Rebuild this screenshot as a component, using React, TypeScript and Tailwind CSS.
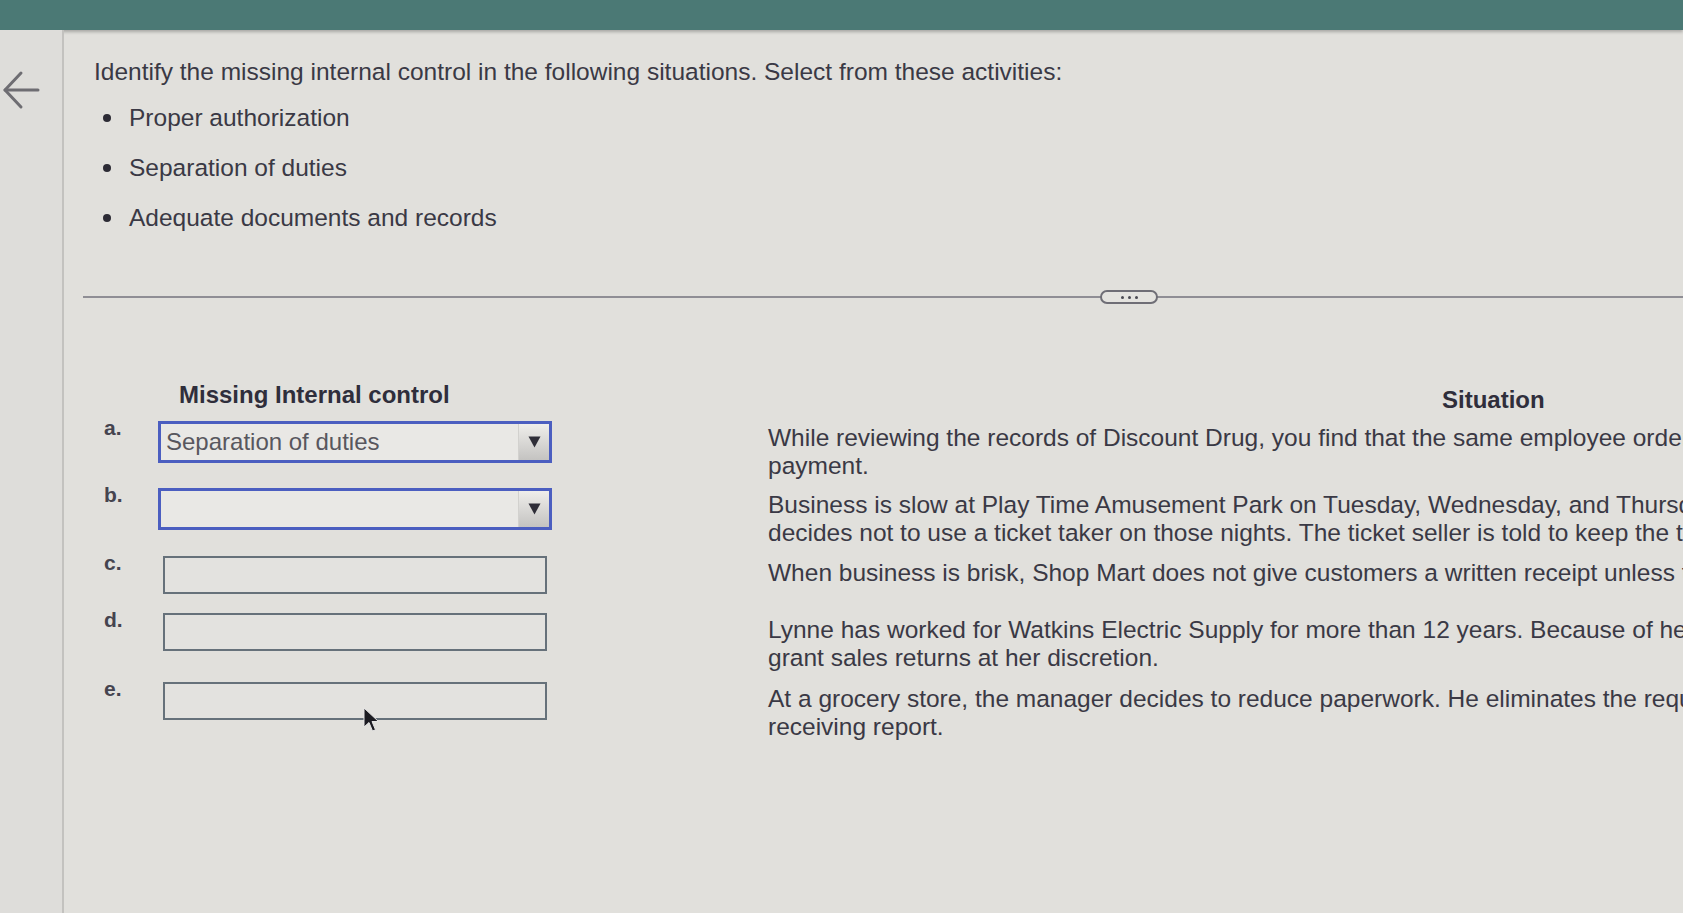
import React from 'react';

const activities = ['Proper authorization', 'Separation of duties', 'Adequate documents and records'];

interface Row {
  label: string;
  kind: 'select' | 'input';
  value?: string;
  lines: string[];
  height: string;
}

const rows: Row[] = [
  {
    label: 'a.',
    kind: 'select',
    value: 'Separation of duties',
    lines: [
      'While reviewing the records of Discount Drug, you find that the same employee orders merchandise and approves invoices for',
      'payment.',
    ],
    height: 'h-[67px]',
  },
  {
    label: 'b.',
    kind: 'select',
    value: '',
    lines: [
      'Business is slow at Play Time Amusement Park on Tuesday, Wednesday, and Thursday nights. To reduce expenses, the business',
      'decides not to use a ticket taker on those nights. The ticket seller is told to keep the tickets as a record of the number sold.',
    ],
    height: 'h-[68px]',
  },
  {
    label: 'c.',
    kind: 'input',
    lines: ['When business is brisk, Shop Mart does not give customers a written receipt unless they ask for one.'],
    height: 'h-[57px]',
  },
  {
    label: 'd.',
    kind: 'input',
    lines: [
      'Lynne has worked for Watkins Electric Supply for more than 12 years. Because of her experience, she is allowed to',
      'grant sales returns at her discretion.',
    ],
    height: 'h-[69px]',
  },
  {
    label: 'e.',
    kind: 'input',
    lines: [
      'At a grocery store, the manager decides to reduce paperwork. He eliminates the requirement that purchases be matched to a',
      'receiving report.',
    ],
    height: 'h-[60px]',
  },
];

function BackArrow() {
  return (
    <svg width="38" height="40" viewBox="0 0 38 40" fill="none" stroke="#6e6d72" strokeWidth="3" strokeLinecap="round" strokeLinejoin="round">
      <polyline points="19,3 3,20 19,37" />
      <line x1="3" y1="20" x2="36" y2="20" />
    </svg>
  );
}

function Cursor() {
  return (
    <svg width="18" height="26" viewBox="0 0 18 26" className="absolute left-[205px] top-[25px]">
      <path d="M1 1 L1 20 L6 15.5 L9.5 24 L12.5 22.8 L9 14.5 L15.5 14.5 Z" fill="#1c1c22" stroke="#e6e6e6" strokeWidth="1" />
    </svg>
  );
}

function SelectBox({ value }: { value: string }) {
  return (
    <div className="flex h-[42px] w-[394px] items-stretch border-[3px] border-[#4b5ec0] bg-[#e9e8e5]">
      <div className="flex flex-1 items-center pl-[5px] text-[24px] text-[#58575e]">{value}</div>
      <div className="flex w-[31px] items-center justify-center border-l border-[#d2d1ce] bg-gradient-to-b from-[#efeeeb] to-[#c4c3c1]">
        <svg width="13" height="12" viewBox="0 0 13 12">
          <path d="M0.5 0.5 H12.5 L6.5 11.5 Z" fill="#2f2e38" />
        </svg>
      </div>
    </div>
  );
}

export default function App() {
  return (
    <div
      className="flex h-[913px] w-[1683px] flex-col overflow-hidden bg-[#e1e0dc] text-[#3a3945]"
      style={{ fontFamily: '"Liberation Sans", Arial, sans-serif' }}
    >
      <div className="h-[30px] shrink-0 bg-[#4b7975] shadow-[0_2px_3px_rgba(0,0,0,0.25)]" />

      <div className="flex flex-1">
        {/* left gutter */}
        <div className="w-[64px] shrink-0 border-r-2 border-[#c3c2bf] bg-[#dedddA] pl-[2px] pt-[40px]">
          <BackArrow />
        </div>

        {/* main column */}
        <div className="flex-1 pl-[19px] pt-[28px]">
          <h1 className="pl-[11px] text-[24.5px] leading-[28px]">
            Identify the missing internal control in the following situations. Select from these activities:
          </h1>

          <ul className="mt-[7px] pl-[20px]">
            {activities.map((a) => (
              <li key={a} className="flex h-[50px] items-center">
                <span className="h-[8px] w-[8px] rounded-full bg-[#2c2b35]" />
                <span className="ml-[18px] text-[24.5px] leading-[28px]">{a}</span>
              </li>
            ))}
          </ul>

          {/* divider with handle */}
          <div className="relative mt-[53px] h-[2px] bg-[#8f8e95]">
            <div className="absolute left-[1017px] top-[-6px] flex h-[14px] w-[58px] items-center justify-center gap-[4px] rounded-full border-2 border-[#6f6e76] bg-[#e4e3df]">
              <span className="h-[3px] w-[3px] rounded-full bg-[#4a4952]" />
              <span className="h-[3px] w-[3px] rounded-full bg-[#4a4952]" />
              <span className="h-[3px] w-[3px] rounded-full bg-[#4a4952]" />
            </div>
          </div>

          {/* table */}
          <div className="mt-[83px] pl-[21px]">
            <div className="flex h-[28px] items-center">
              <div className="w-[54px]" />
              <div className="w-[610px] pl-[21px] text-[24px] font-bold text-[#2f2e3b]">Missing Internal control</div>
              <div className="pl-[674px] pt-[10px] text-[24px] font-bold text-[#2f2e3b]">Situation</div>
            </div>

            <div className="mt-[12px]">
              {rows.map((r) => (
                <div key={r.label} className={`flex ${r.height}`}>
                  <div className="-mt-[7px] w-[54px] shrink-0 text-[21px] font-bold leading-[28px] text-[#45444f]">{r.label}</div>
                  <div className="relative w-[610px] shrink-0">
                    {r.kind === 'select' ? (
                      <SelectBox value={r.value || ''} />
                    ) : (
                      <div className="ml-[5px] h-[38px] w-[384px] border-2 border-[#66717a] bg-[#e3e2df]" />
                    )}
                    {r.label === 'e.' && <Cursor />}
                  </div>
                  <div className="pt-[3px]">
                    {r.lines.map((l, i) => (
                      <div key={i} className="whitespace-nowrap text-[24.5px] leading-[28px]">
                        {l}
                      </div>
                    ))}
                  </div>
                </div>
              ))}
            </div>
          </div>
        </div>
      </div>
    </div>
  );
}
